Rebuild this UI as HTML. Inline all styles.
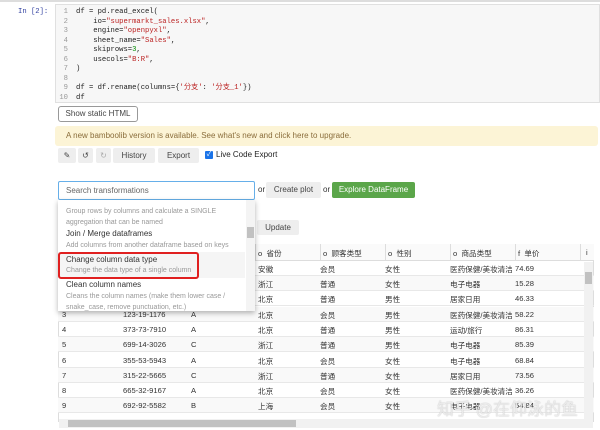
<!DOCTYPE html>
<html><head><meta charset="utf-8"><style>
*{margin:0;padding:0;box-sizing:border-box}
body{width:600px;height:430px;overflow:hidden;background:#fff;font-family:"Liberation Sans","Noto Sans CJK SC",sans-serif;font-size:8px;color:#333;position:relative}
.a{position:absolute;white-space:nowrap}
.code{left:55px;top:4px;width:545px;height:99px;background:#f7f7f7;border:1px solid #e0e0e0}
.mono{font-family:"Liberation Mono","Noto Sans CJK SC",monospace;font-size:7.2px;line-height:9.5px;color:#222}
.ln{color:#999;text-align:right;width:14px}
.s{color:#b22}.n{color:#080}
.btn{background:#eee;border-radius:2px;color:#444;text-align:center;font-size:8px}
.row{position:absolute;left:58px;width:536px;height:15.3px;border-bottom:1px solid #e8e8e8}
.c{position:absolute;top:3px;font-size:7.6px;color:#333;max-width:62px;overflow:hidden;white-space:nowrap}
</style></head><body>
<div class="a" style="top:0;left:0;width:600px;height:2px;background:#ddd"></div>
<div class="a mono" style="left:18px;top:8px;color:#303f9f">In  [2]:</div>
<div class="a code"></div>
<div class="a mono ln" style="left:54px;top:8px;white-space:pre">1
2
3
4
5
6
7
8
9
10</div>
<div class="a mono" style="left:76px;top:8px;white-space:pre">df = pd.read_excel(
    io=<span class="s">"supermarkt_sales.xlsx"</span>,
    engine=<span class="s">"openpyxl"</span>,
    sheet_name=<span class="s">"Sales"</span>,
    skiprows=<span class="n">3</span>,
    usecols=<span class="s">"B:R"</span>,
)

df = df.rename(columns={<span class="s">'分支'</span>: <span class="s">'分支_1'</span>})
df</div>
<div class="a" style="left:58px;top:106px;width:80px;height:16px;border:1px solid #999;border-radius:3px;text-align:center;line-height:14px;font-size:8px;color:#444">Show static HTML</div>
<div class="a" style="left:55px;top:126px;width:543px;height:20px;background:#fcf4d6;border-radius:3px;color:#8a6d3b;line-height:20px;padding-left:11px;font-size:8px">A new bamboolib version is available. See what's new and click here to upgrade.</div>
<div class="a btn" style="left:58px;top:148px;width:18px;height:15px;line-height:15px">✎</div>
<div class="a btn" style="left:78px;top:148px;width:15px;height:15px;line-height:15px">↺</div>
<div class="a btn" style="left:96px;top:148px;width:15px;height:15px;line-height:15px;color:#aaa">↻</div>
<div class="a btn" style="left:113px;top:148px;width:42px;height:15px;line-height:15px">History</div>
<div class="a btn" style="left:158px;top:148px;width:41px;height:15px;line-height:15px">Export</div>
<div class="a" style="left:205px;top:151px;width:8px;height:8px;background:#1a73e8;border-radius:1px;color:#fff;font-size:7px;line-height:8px;text-align:center">✓</div>
<div class="a" style="left:216px;top:150px;color:#222">Live Code Export</div>
<div class="a" style="left:58px;top:181px;width:197px;height:19px;border:1px solid #66afe9;border-radius:2px;padding-left:7px;line-height:17px;color:#666">Search transformations</div>
<div class="a" style="left:258px;top:185px;color:#333">or</div>
<div class="a btn" style="left:266px;top:182px;width:55px;height:16px;line-height:16px">Create plot</div>
<div class="a" style="left:323px;top:185px;color:#333">or</div>
<div class="a" style="left:332px;top:182px;width:83px;height:16px;background:#5ba64a;border-radius:2px;color:#fff;text-align:center;line-height:16px">Explore DataFrame</div>
<div class="a btn" style="left:257px;top:220px;width:42px;height:15px;line-height:15px">Update</div>
<div class="a" style="left:58px;top:244px;width:536px;height:178px;border:1px solid #ddd"></div>
<div class="row" style="top:244px;height:17px;background:#fafafa;border-bottom:1px solid #ddd">
<span class="c" style="left:200px;top:4px">o&nbsp; 省份</span><span class="c" style="left:265px;top:4px">o&nbsp; 顾客类型</span><span class="c" style="left:330px;top:4px">o&nbsp; 性别</span><span class="c" style="left:395px;top:4px">o&nbsp; 商品类型</span><span class="c" style="left:460px;top:4px">f&nbsp; 单价</span><span class="c" style="left:528px;top:4px">i</span>
</div>
<div class="a" style="left:255px;top:244px;width:1px;height:17px;background:#ddd"></div>
<div class="a" style="left:320px;top:244px;width:1px;height:17px;background:#ddd"></div>
<div class="a" style="left:385px;top:244px;width:1px;height:17px;background:#ddd"></div>
<div class="a" style="left:450px;top:244px;width:1px;height:17px;background:#ddd"></div>
<div class="a" style="left:515px;top:244px;width:1px;height:17px;background:#ddd"></div>
<div class="a" style="left:580px;top:244px;width:1px;height:17px;background:#ddd"></div>
<div class="row" style="top:261px"><span class="c" style="left:200px">安徽</span><span class="c" style="left:262px">会员</span><span class="c" style="left:327px">女性</span><span class="c" style="left:392px">医药保健/美妆清洁</span><span class="c" style="left:457px">74.69</span></div>
<div class="row" style="top:276px;background:#f9f9f9"><span class="c" style="left:200px">浙江</span><span class="c" style="left:262px">普通</span><span class="c" style="left:327px">女性</span><span class="c" style="left:392px">电子电器</span><span class="c" style="left:457px">15.28</span></div>
<div class="row" style="top:291px"><span class="c" style="left:200px">北京</span><span class="c" style="left:262px">普通</span><span class="c" style="left:327px">男性</span><span class="c" style="left:392px">居家日用</span><span class="c" style="left:457px">46.33</span></div>
<div class="row" style="top:307px;background:#f9f9f9"><span class="c" style="left:4px">3</span><span class="c" style="left:65px">123-19-1176</span><span class="c" style="left:133px">A</span><span class="c" style="left:200px">北京</span><span class="c" style="left:262px">会员</span><span class="c" style="left:327px">男性</span><span class="c" style="left:392px">医药保健/美妆清洁</span><span class="c" style="left:457px">58.22</span></div>
<div class="row" style="top:322px"><span class="c" style="left:4px">4</span><span class="c" style="left:65px">373-73-7910</span><span class="c" style="left:133px">A</span><span class="c" style="left:200px">北京</span><span class="c" style="left:262px">普通</span><span class="c" style="left:327px">男性</span><span class="c" style="left:392px">运动/旅行</span><span class="c" style="left:457px">86.31</span></div>
<div class="row" style="top:337px;background:#f9f9f9"><span class="c" style="left:4px">5</span><span class="c" style="left:65px">699-14-3026</span><span class="c" style="left:133px">C</span><span class="c" style="left:200px">浙江</span><span class="c" style="left:262px">普通</span><span class="c" style="left:327px">男性</span><span class="c" style="left:392px">电子电器</span><span class="c" style="left:457px">85.39</span></div>
<div class="row" style="top:353px"><span class="c" style="left:4px">6</span><span class="c" style="left:65px">355-53-5943</span><span class="c" style="left:133px">A</span><span class="c" style="left:200px">北京</span><span class="c" style="left:262px">会员</span><span class="c" style="left:327px">女性</span><span class="c" style="left:392px">电子电器</span><span class="c" style="left:457px">68.84</span></div>
<div class="row" style="top:368px;background:#f9f9f9"><span class="c" style="left:4px">7</span><span class="c" style="left:65px">315-22-5665</span><span class="c" style="left:133px">C</span><span class="c" style="left:200px">浙江</span><span class="c" style="left:262px">普通</span><span class="c" style="left:327px">女性</span><span class="c" style="left:392px">居家日用</span><span class="c" style="left:457px">73.56</span></div>
<div class="row" style="top:383px"><span class="c" style="left:4px">8</span><span class="c" style="left:65px">665-32-9167</span><span class="c" style="left:133px">A</span><span class="c" style="left:200px">北京</span><span class="c" style="left:262px">会员</span><span class="c" style="left:327px">女性</span><span class="c" style="left:392px">医药保健/美妆清洁</span><span class="c" style="left:457px">36.26</span></div>
<div class="row" style="top:398px;background:#f9f9f9"><span class="c" style="left:4px">9</span><span class="c" style="left:65px">692-92-5582</span><span class="c" style="left:133px">B</span><span class="c" style="left:200px">上海</span><span class="c" style="left:262px">会员</span><span class="c" style="left:327px">女性</span><span class="c" style="left:392px">电子电器</span><span class="c" style="left:457px">54.84</span></div>
<div class="a" style="left:59px;top:419px;width:534px;height:9px;background:#f1f1f1"></div>
<div class="a" style="left:68px;top:420px;width:228px;height:7px;background:#c1c1c1"></div>
<div class="a" style="left:584px;top:262px;width:9px;height:157px;background:#f1f1f1"></div>
<div class="a" style="left:585px;top:272px;width:7px;height:12px;background:#c1c1c1"></div>
<div class="a" style="left:437px;top:395px;font-size:17px;color:rgba(255,255,255,.7);text-shadow:0 0 1px #aaa">知乎 @在仰泳的鱼</div>
<div class="a" style="left:58px;top:200px;width:197px;height:111px;background:#fff;box-shadow:0 2px 5px rgba(0,0,0,.3);overflow:hidden">
<div class="a" style="left:8px;top:6px;font-size:7px;color:#999;line-height:11px">Group rows by columns and calculate a SINGLE<br>aggregation that can be named</div>
<div class="a" style="left:8px;top:29px;font-size:8px;color:#333">Join / Merge dataframes</div>
<div class="a" style="left:8px;top:42px;font-size:7px;color:#999">Add columns from another dataframe based on keys</div>
<div class="a" style="left:0;top:52px;width:187px;height:26px;background:#f5f5f5"></div>
<div class="a" style="left:8px;top:55px;font-size:8px;color:#333">Change column data type</div>
<div class="a" style="left:8px;top:67px;font-size:7px;color:#999">Change the data type of a single column</div>
<div class="a" style="left:8px;top:80px;font-size:8px;color:#333">Clean column names</div>
<div class="a" style="left:8px;top:91px;font-size:7px;color:#999;line-height:11px">Cleans the column names (make them lower case /<br>snake_case, remove punctuation, etc.)</div>
<div class="a" style="left:188px;top:0;width:9px;height:111px;background:#f4f4f4"></div>
<div class="a" style="left:189px;top:27px;width:7px;height:11px;background:#c1c1c1"></div>
</div>
<div class="a" style="left:58px;top:252px;width:141px;height:27px;border:2px solid #e02020;border-radius:3px"></div>
</body></html>
